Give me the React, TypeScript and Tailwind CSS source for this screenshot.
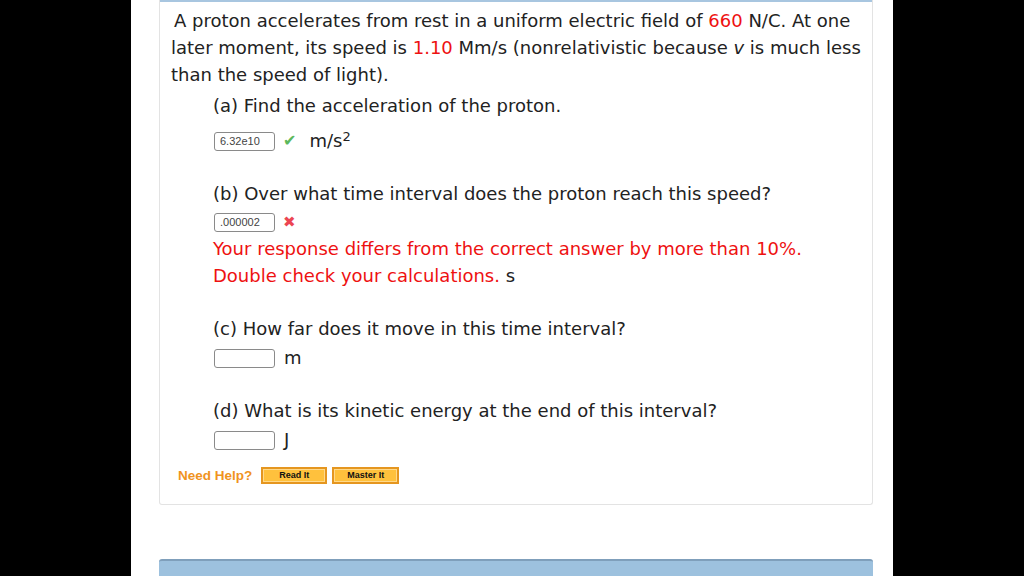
export default function App() {
  const body = "font-['DejaVu_Sans',Verdana,sans-serif] text-[18px] text-[#222]"

  const Box = ({ value }: { value?: string }) => (
    <div className="ml-[1px] w-[61px] h-[19px] border border-[#8a8a8a] rounded-[3px] bg-white flex items-center px-[5px] font-['Liberation_Sans',Arial,sans-serif] text-[11px] text-[#444]">
      {value}
    </div>
  )

  return (
    <div className="w-[1024px] h-[576px] bg-black flex justify-center overflow-hidden">
      <div className="w-[762px] h-full bg-white flex flex-col">
        <div className="ml-[28px] mr-[20px] h-[505px] border border-[#e3e3e3] border-t-0 rounded-b-[3px] flex flex-col">
          <div className="h-[2px] bg-[#a8c6e0]" />
          <div className={`${body} pl-[11px] pr-[6px] pt-[5px] leading-[27px]`}>
            <p className="whitespace-nowrap">
              <span className="ml-[3px]">A proton accelerates from rest in a uniform electric field of </span>
              <span className="text-[#ee1111]">660</span> N/C. At one
              <br />
              later moment, its speed is <span className="text-[#ee1111]">1.10</span> Mm/s (nonrelativistic because <i>v</i> is much less
              <br />
              than the speed of light).
            </p>

            <div className="pl-[42px] mt-[4px]">
              <p>(a) Find the acceleration of the proton.</p>
              <div className="flex items-center mt-[13px] h-[18px]">
                <Box value="6.32e10" />
                <span className="ml-[8px] text-[#5cb85c] text-[16px] leading-none">✔</span>
                <span className="ml-[13px] leading-none">
                  m/s<sup className="text-[13px]">2</sup>
                </span>
              </div>

              <p className="mt-[30px]">(b) Over what time interval does the proton reach this speed?</p>
              <div className="flex items-center mt-[6px] h-[18px]">
                <Box value=".000002" />
                <span className="ml-[8px] text-[#ec4553] text-[15px] leading-none">✖</span>
              </div>
              <p className="mt-[4px] text-[#ee1111]">
                Your response differs from the correct answer by more than 10%.
                <br />
                Double check your calculations. <span className="text-[#222]">s</span>
              </p>

              <p className="mt-[26px]">(c) How far does it move in this time interval?</p>
              <div className="flex items-center mt-[6px] h-[20px]">
                <Box />
                <span className="ml-[9px] leading-none">m</span>
              </div>

              <p className="mt-[29px]">(d) What is its kinetic energy at the end of this interval?</p>
              <div className="flex items-center mt-[6px] h-[20px]">
                <Box />
                <span className="ml-[9px] leading-none">J</span>
              </div>
            </div>

            <div className="flex items-center mt-[17px] pl-[7px]">
              <span className="font-['Liberation_Sans',Arial,sans-serif] font-bold text-[13.5px] text-[#f0931e] leading-none">Need Help?</span>
              <button className="ml-[9px] w-[66px] h-[17px] bg-[#ffc13d] border-2 border-[#e5961f] shadow-[inset_0_0_0_1px_#ffd98a] font-['Liberation_Sans',Arial,sans-serif] font-bold text-[9px] text-[#111] leading-none">
                Read It
              </button>
              <button className="ml-[5px] w-[67px] h-[17px] bg-[#ffc13d] border-2 border-[#e5961f] shadow-[inset_0_0_0_1px_#ffd98a] font-['Liberation_Sans',Arial,sans-serif] font-bold text-[9px] text-[#111] leading-none">
                Master It
              </button>
            </div>
          </div>
        </div>
        <div className="ml-[28px] mr-[20px] mt-[54px] flex-1 bg-[#9dc1de] border-t-2 border-[#7f9fbb] rounded-t-[3px]" />
      </div>
    </div>
  )
}
